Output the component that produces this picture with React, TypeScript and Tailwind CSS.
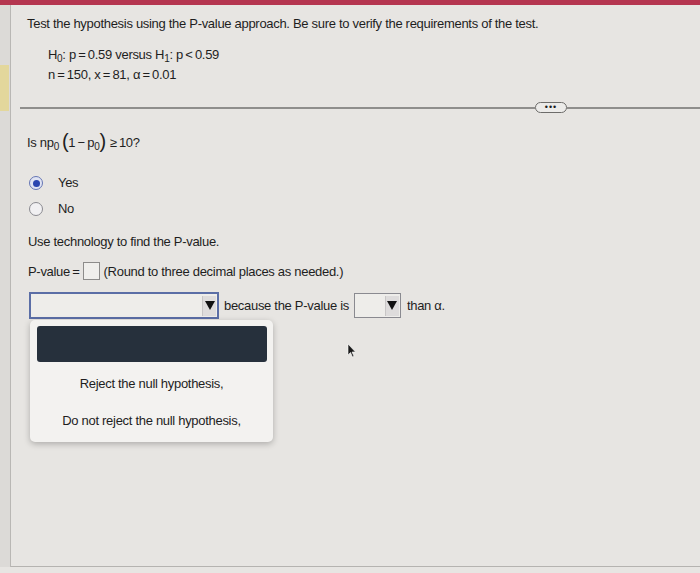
// Radio input drawn with plain elements
function Radio({ checked, label }: { checked?: boolean; label: string }) {
  return (
    <div className="flex items-center h-[26px]">
      <span
        className={`flex items-center justify-center w-[14px] h-[14px] rounded-full border ml-[1px] ${
          checked ? 'border-[#6676b4] bg-[#dfe3f3]' : 'border-[#8a8a90] bg-[#f1f0f2]'
        }`}
      >
        {checked && <span className="w-[7px] h-[7px] rounded-full bg-[#2a45b0]" />}
      </span>
      <span className="ml-[15px]">{label}</span>
    </div>
  );
}

function SelectArrow() {
  return (
    <span className="flex items-center justify-center w-[14px] h-[20px] bg-[#dedcdc] border-l border-[#c8c6c6]">
      <svg width="10" height="9" viewBox="0 0 10 9">
        <path d="M0 0 H10 L5 9 Z" fill="#111" />
      </svg>
    </span>
  );
}

export default function App() {
  return (
    <div
      className="relative w-[700px] h-[573px] overflow-hidden bg-[#e7e5e2] text-[#1e1e1e] text-[13px] tracking-[-0.3px]"
      style={{ fontFamily: '"Liberation Sans", Arial, sans-serif' }}
    >
      {/* 상단 바 */}
      <div className="h-[5px] bg-[#b53650]" />

      <div className="flex h-[562px]">
        {/* 왼쪽 여백 */}
        <div className="w-[11px] shrink-0 border-r border-[#b9b7b4] bg-[#dcdad7] flex flex-col">
          <div className="h-[60px]" />
          <div className="h-[46px] w-[9px] bg-[#e3d79c]" />
        </div>

        <div className="flex-1 flex flex-col">
          <div className="pl-[16px] pt-[11px]">
            <p className="leading-[16px]">
              Test the hypothesis using the P-value approach. Be sure to verify the requirements of the test.
            </p>
            <div className="pl-[21px] mt-[13px] leading-[20px]">
              <p>
                H<sub className="text-[10px]">0</sub>: p{'\u2009'}={'\u2009'}0.59 versus H<sub className="text-[10px]">1</sub>: p{'\u2009'}&lt;{'\u2009'}0.59
              </p>
              <p>n{'\u2009'}={'\u2009'}150, x{'\u2009'}={'\u2009'}81, α{'\u2009'}={'\u2009'}0.01</p>
            </div>
          </div>

          {/* 구분선 */}
          <div className="flex items-center mt-[17px] ml-[9px]">
            <div className="w-[515px] h-[2px] bg-[#8f8e8c]" />
            <span className="flex items-center justify-center w-[32px] h-[11px] rounded-full border border-[#6d6c6a] bg-[#ecebe9] text-[9px] leading-none tracking-[1px]">
              •••
            </span>
            <div className="flex-1 h-[2px] bg-[#8f8e8c]" />
          </div>

          <div className="pl-[16px]">
            <p className="mt-[17px] flex items-baseline h-[22px]">
              <span>Is np</span>
              <span className="text-[10px] relative top-[3px]">0</span>
              <span className="text-[20px] leading-[20px] ml-[3px] relative top-[1px]">(</span>
              <span>1{'\u2009'}−{'\u2009'}p</span>
              <span className="text-[10px] relative top-[3px]">0</span>
              <span className="text-[20px] leading-[20px] relative top-[1px]">)</span>
              <span className="ml-[4px]">≥{'\u2009'}10?</span>
            </p>

            <div className="mt-[18px] ml-[1px] flex flex-col">
              <Radio checked label="Yes" />
              <Radio label="No" />
            </div>

            <p className="mt-[10px] ml-[1px]">Use technology to find the P-value.</p>

            <div className="mt-[10px] ml-[1px] flex items-center">
              <span>P-value{'\u2009'}=</span>
              <span className="ml-[3px] w-[17px] h-[18px] border border-[#8d8c8a] bg-[#f0efec]" />
              <span className="ml-[4px]">(Round to three decimal places as needed.)</span>
            </div>

            <div className="mt-[11px] ml-[2px] flex items-center">
              <div className="relative">
                <div className="flex items-center justify-end w-[190px] h-[27px] border-2 border-[#5b6ea6] bg-[#eeedea] pr-[1px]">
                  <SelectArrow />
                </div>
                {/* 드롭다운 메뉴 */}
                <div className="absolute left-[1px] top-[28px] w-[243px] h-[122px] rounded-[5px] bg-[#f3f2f0] shadow-[0_2px_6px_rgba(0,0,0,0.25)] flex flex-col items-center pt-[6px]">
                  <div className="w-[230px] h-[36px] rounded-[3px] bg-[#26303c]" />
                  <p className="mt-[12px]">Reject the null hypothesis,</p>
                  <p className="mt-[17px]">Do not reject the null hypothesis,</p>
                </div>
              </div>
              <span className="ml-[5px]">because the P-value is</span>
              <div className="ml-[5px] flex items-center justify-end w-[47px] h-[25px] border border-[#8a8a90] bg-[#eeedea] pr-[1px]">
                <SelectArrow />
              </div>
              <span className="ml-[6px]">than α.</span>
            </div>

            {/* 마우스 커서 */}
            <div className="absolute left-[347px] top-[343px]">
              <svg width="10" height="15" viewBox="0 0 10 15">
                <path d="M1 1 L1 12 L3.5 9.5 L5.5 14 L7 13.3 L5 9 L8.5 9 Z" fill="#1a1a1a" stroke="#fff" strokeWidth="0.6" />
              </svg>
            </div>
          </div>

          <div className="flex-1" />
          <div className="h-[1px] bg-[#b5b3b0]" />
        </div>
      </div>
    </div>
  );
}
